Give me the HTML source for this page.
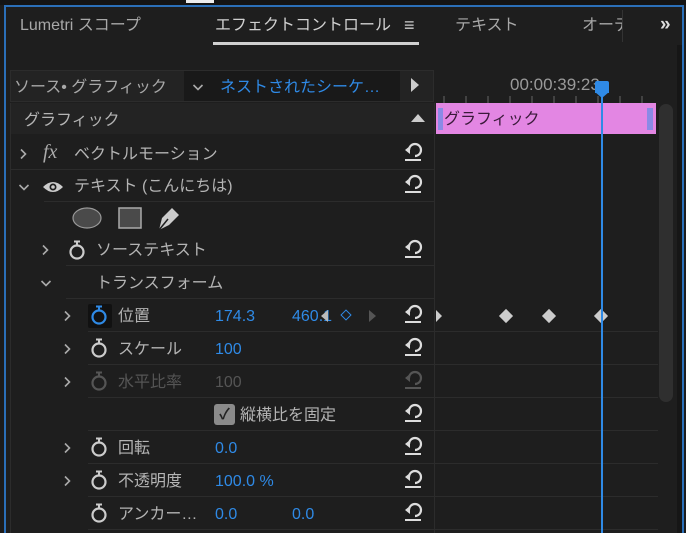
<!DOCTYPE html>
<html><head><meta charset="utf-8"><style>
*{margin:0;padding:0;box-sizing:border-box}
body{width:686px;height:533px;background:#1c1c1c;overflow:hidden;position:relative;font-family:"Liberation Sans","Noto Sans CJK JP",sans-serif;font-size:16px;line-height:19px;color:#b4b4b4}
.a{position:absolute;white-space:nowrap}
.b{color:#2f8ae6}
.ln{position:absolute;height:1px;background:#2c2c2c}
.rs{position:absolute;left:402px;width:22px;height:22px}
.sw{position:absolute;width:18px;height:20px}
.cr{position:absolute;width:10px;height:12px}
.cd{position:absolute;width:12px;height:10px}
</style></head><body>
<svg width="0" height="0" style="position:absolute"><defs>
<symbol id="sw" viewBox="0 0 18 20"><circle cx="9" cy="12" r="6.5" fill="none" stroke="currentColor" stroke-width="2.2"/><path d="M9 5.5V2M6 1.5H12" stroke="currentColor" stroke-width="2" fill="none"/></symbol>
<symbol id="rs" viewBox="0 0 22 22"><path d="M7 9A6 6 0 1 1 13 15" fill="none" stroke="currentColor" stroke-width="2.2"/><path d="M3 9L8 5V13Z" fill="currentColor"/><line x1="3" y1="19" x2="19" y2="19" stroke="currentColor" stroke-width="2"/></symbol>
<symbol id="cr" viewBox="0 0 10 12"><path d="M3 1.5L7.5 6L3 10.5" fill="none" stroke="#aaa" stroke-width="1.6"/></symbol>
<symbol id="cd" viewBox="0 0 12 10"><path d="M1.5 3L6 7.5L10.5 3" fill="none" stroke="#aaa" stroke-width="1.6"/></symbol>
</defs></svg>
<div class="a" style="left:0;top:0;width:686px;height:5px;background:#141414"></div>
<div class="a" style="left:186px;top:0;width:28px;height:3px;background:#eee"></div>
<div class="a" style="left:4px;top:5px;width:680px;height:528px;border:2px solid #2b6fb8;border-bottom:none;background:#1e1e1e"></div>
<!-- tabs -->
<div class="a" style="left:20px;top:16px;color:#a8a8a8">Lumetri スコープ</div>
<div class="a" style="left:215px;top:16px;color:#d0d0d0">エフェクトコントロール</div>
<div class="a" style="left:404px;top:16px;color:#ccc;font-size:18px">≡</div>
<div class="a" style="left:213px;top:42px;width:206px;height:3px;background:#d0d0d0"></div>
<div class="a" style="left:455px;top:16px;color:#a8a8a8">テキスト</div>
<div class="a" style="left:582px;top:16px;width:40px;overflow:hidden;color:#a8a8a8">オーディオ</div>
<div class="a" style="left:622px;top:10px;width:1px;height:32px;background:#333"></div>
<div class="a" style="left:660px;top:15px;color:#ddd;font-size:19px;font-weight:bold">»</div>
<!-- source row -->
<div class="a" style="left:10px;top:70px;width:424px;height:32px;background:#232323;border:1px solid #2c2c2c"></div>
<div class="a" style="left:184px;top:71px;width:216px;height:30px;background:#191919"></div>
<div class="a" style="left:14px;top:78px;color:#a8a8a8">ソース• グラフィック</div>
<svg class="cd" style="left:192px;top:82px"><use href="#cd"/></svg>
<div class="a" style="left:220px;top:78px;color:#2f8ae6">ネストされたシーケ…</div>
<div class="a" style="left:411px;top:78px;width:0;height:0;border-left:8px solid #ccc;border-top:7px solid transparent;border-bottom:7px solid transparent"></div>
<div class="a" style="left:510px;top:75px;color:#9a9a9a;font-size:17px">00:00:39:23</div>
<svg class="a" style="left:436px;top:94px" width="222" height="10"><g stroke="#666" stroke-width="1">
<line x1="8" y1="2" x2="8" y2="10"/><line x1="30" y1="2" x2="30" y2="10"/><line x1="52" y1="2" x2="52" y2="10"/><line x1="74" y1="2" x2="74" y2="10"/><line x1="96" y1="2" x2="96" y2="10"/><line x1="118" y1="2" x2="118" y2="10"/><line x1="140" y1="2" x2="140" y2="10"/><line x1="162" y1="2" x2="162" y2="10"/><line x1="184" y1="2" x2="184" y2="10"/><line x1="206" y1="2" x2="206" y2="10"/></g></svg>
<!-- header -->
<div class="a" style="left:10px;top:103px;width:424px;height:31px;background:#232323"></div>
<div class="a" style="left:24px;top:111px;color:#b4b4b4">グラフィック</div>
<div class="a" style="left:411px;top:114px;width:0;height:0;border-bottom:8px solid #ccc;border-left:7px solid transparent;border-right:7px solid transparent"></div>
<div class="a" style="left:434px;top:103px;width:1px;height:430px;background:#2c2c2c"></div>
<div class="a" style="left:10px;top:103px;width:1px;height:430px;background:#2c2c2c"></div>
<!-- clip -->
<div class="a" style="left:436px;top:103px;width:220px;height:31px;background:#e386e3"></div>
<div class="a" style="left:438px;top:108px;width:5px;height:22px;background:#8a8ae6"></div>
<div class="a" style="left:647px;top:108px;width:6px;height:22px;background:#8a8ae6"></div>
<div class="a" style="left:444px;top:110px;color:#3a1a3a">グラフィック</div>
<!-- scrollbar -->
<div class="a" style="left:659px;top:104px;width:14px;height:298px;background:#2f2f2f;border-radius:7px"></div>
<div class="a" style="left:677px;top:45px;width:5px;height:488px;background:#161616"></div>
<!-- row lines -->
<div class="ln" style="left:11px;top:169px;width:424px"></div>
<div class="ln" style="left:44px;top:201px;width:391px"></div>
<div class="ln" style="left:66px;top:265px;width:369px"></div>
<div class="ln" style="left:66px;top:298px;width:369px"></div>
<div class="ln" style="left:88px;top:331px;width:570px"></div>
<div class="ln" style="left:88px;top:364px;width:570px"></div>
<div class="ln" style="left:88px;top:397px;width:570px"></div>
<div class="ln" style="left:88px;top:430px;width:570px"></div>
<div class="ln" style="left:88px;top:463px;width:570px"></div>
<div class="ln" style="left:88px;top:496px;width:570px"></div>
<div class="ln" style="left:88px;top:529px;width:570px"></div>
<!-- rows -->
<svg class="cr" style="left:18px;top:148px"><use href="#cr"/></svg>
<div class="a" style="left:43px;top:143px;font-style:italic;font-family:'Liberation Serif',serif;font-size:20px;color:#aaa">fx</div>
<div class="a" style="left:74px;top:145px">ベクトルモーション</div>
<svg class="cd" style="left:18px;top:182px"><use href="#cd"/></svg>
<svg class="a" style="left:42px;top:180px" width="22" height="14"><path d="M1 7Q11-3 21 7Q11 17 1 7Z" fill="#ccc"/><circle cx="11" cy="7" r="3.5" fill="#1e1e1e"/><circle cx="11" cy="7" r="1.8" fill="#ccc"/></svg>
<div class="a" style="left:74px;top:177px">テキスト (こんにちは)</div>
<svg class="a" style="left:72px;top:206px" width="120" height="26"><ellipse cx="15" cy="12" rx="14" ry="10" fill="#4a4a4a" stroke="#999" stroke-width="1.2"/><rect x="47" y="2" width="22" height="20" fill="#4a4a4a" stroke="#aaa" stroke-width="1.5"/><path d="M87 24L90 12L97 5L104 12L97 19Z M97 5L100 2L107 9L104 12" fill="#ccc"/><line x1="87" y1="24" x2="96" y2="13" stroke="#1e1e1e" stroke-width="1.5"/></svg>
<svg class="cr" style="left:40px;top:244px"><use href="#cr"/></svg>
<svg class="cd" style="left:40px;top:278px"><use href="#cd"/></svg>
<div class="a" style="left:96px;top:241px">ソーステキスト</div>
<div class="a" style="left:96px;top:274px">トランスフォーム</div>
<svg class="cr" style="left:62px;top:310px"><use href="#cr"/></svg>
<svg class="cr" style="left:62px;top:343px"><use href="#cr"/></svg>
<svg class="cr" style="left:62px;top:376px"><use href="#cr"/></svg>
<svg class="cr" style="left:62px;top:442px"><use href="#cr"/></svg>
<svg class="cr" style="left:62px;top:475px"><use href="#cr"/></svg>
<div class="a" style="left:88px;top:304px;width:24px;height:24px;background:#111;border-radius:2px"></div>
<div class="a" style="left:118px;top:307px">位置</div>
<div class="a b" style="left:215px;top:307px">174.3</div>
<div class="a b" style="left:292px;top:307px">460.1</div>
<div class="a" style="left:321px;top:310px;width:0;height:0;border-right:7px solid #bbb;border-top:6px solid transparent;border-bottom:6px solid transparent"></div>
<div class="a" style="left:342px;top:311px;width:8px;height:8px;border:1.5px solid #2f8ae6;transform:rotate(45deg)"></div>
<div class="a" style="left:369px;top:310px;width:0;height:0;border-left:7px solid #555;border-top:6px solid transparent;border-bottom:6px solid transparent"></div>
<div class="a" style="left:118px;top:340px">スケール</div>
<div class="a b" style="left:215px;top:340px">100</div>
<div class="a" style="left:118px;top:373px;color:#555">水平比率</div>
<div class="a" style="left:215px;top:373px;color:#555">100</div>
<div class="a" style="left:214px;top:404px;width:21px;height:21px;background:#8a8a8a;border-radius:3px;color:#222;font-size:15px;text-align:center;line-height:21px;font-weight:bold">✓</div>
<div class="a" style="left:240px;top:406px">縦横比を固定</div>
<div class="a" style="left:118px;top:439px">回転</div>
<div class="a b" style="left:215px;top:439px">0.0</div>
<div class="a" style="left:118px;top:472px">不透明度</div>
<div class="a b" style="left:215px;top:472px">100.0 %</div>
<div class="a" style="left:118px;top:505px">アンカー…</div>
<div class="a b" style="left:215px;top:505px">0.0</div>
<div class="a b" style="left:292px;top:505px">0.0</div>
<!-- stopwatches -->
<svg class="sw" style="left:68px;top:240px;color:#ccc"><use href="#sw"/></svg>
<svg class="sw" style="left:90px;top:305px;color:#2f8ae6"><use href="#sw"/></svg>
<svg class="sw" style="left:90px;top:338px;color:#ccc"><use href="#sw"/></svg>
<svg class="sw" style="left:90px;top:371px;color:#555"><use href="#sw"/></svg>
<svg class="sw" style="left:90px;top:437px;color:#ccc"><use href="#sw"/></svg>
<svg class="sw" style="left:90px;top:470px;color:#ccc"><use href="#sw"/></svg>
<svg class="sw" style="left:90px;top:503px;color:#ccc"><use href="#sw"/></svg>
<!-- resets -->
<svg class="rs" style="top:141px;color:#ddd"><use href="#rs"/></svg>
<svg class="rs" style="top:173px;color:#ddd"><use href="#rs"/></svg>
<svg class="rs" style="top:238px;color:#ddd"><use href="#rs"/></svg>
<svg class="rs" style="top:303px;color:#ddd"><use href="#rs"/></svg>
<svg class="rs" style="top:336px;color:#ddd"><use href="#rs"/></svg>
<svg class="rs" style="top:369px;color:#555"><use href="#rs"/></svg>
<svg class="rs" style="top:402px;color:#ddd"><use href="#rs"/></svg>
<svg class="rs" style="top:435px;color:#ddd"><use href="#rs"/></svg>
<svg class="rs" style="top:468px;color:#ddd"><use href="#rs"/></svg>
<svg class="rs" style="top:501px;color:#ddd"><use href="#rs"/></svg>
<!-- keyframes -->
<div class="a" style="left:436px;top:310px;width:0;height:0;border-left:6px solid #ccc;border-top:6px solid transparent;border-bottom:6px solid transparent"></div>
<div class="a" style="left:501px;top:311px;width:10px;height:10px;background:#ccc;transform:rotate(45deg)"></div>
<div class="a" style="left:544px;top:311px;width:10px;height:10px;background:#ccc;transform:rotate(45deg)"></div>
<div class="a" style="left:596px;top:311px;width:10px;height:10px;background:#ccc;transform:rotate(45deg)"></div>
<!-- playhead -->
<div class="a" style="left:601px;top:90px;width:2px;height:443px;background:#2f8ae6"></div>
<div class="a" style="left:595px;top:81px;width:14px;height:12px;background:#2f8ae6;border-radius:2px 2px 0 0"></div>
<div class="a" style="left:595px;top:92px;width:0;height:0;border-top:6px solid #2f8ae6;border-left:7px solid transparent;border-right:7px solid transparent"></div>
</body></html>
